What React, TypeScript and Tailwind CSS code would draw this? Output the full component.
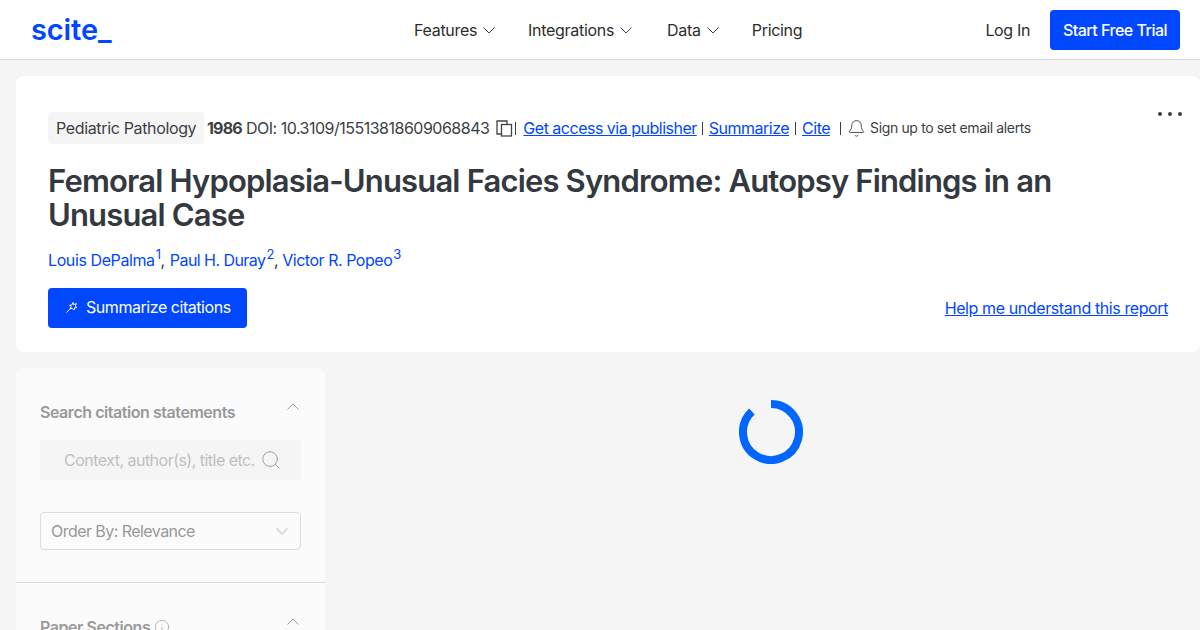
import React from "react";
import { Search, Bell, Info } from "lucide-react";

function Chev({ up = false, color = "#444", w = 1 }: { up?: boolean; color?: string; w?: number }) {
  return (
    <svg width="12" height="7" viewBox="0 0 12 7" fill="none" stroke={color} strokeWidth={w}>
      <path d={up ? "M0.5 6.5L6 1L11.5 6.5" : "M0.5 0.5L6 6L11.5 0.5"} />
    </svg>
  );
}

function NavItem({ label, arrow = true, className = "" }: { label: string; arrow?: boolean; className?: string }) {
  return (
    <div className={"flex items-center gap-[6px] text-[16px] text-[#2d2d2d] tracking-[-0.3px] " + className}>
      <span>{label}</span>
      {arrow && (
        <span className="mt-[2px] flex">
          <Chev />
        </span>
      )}
    </div>
  );
}

function CopyIcon() {
  return (
    <svg width="17" height="17" viewBox="0 0 17 17" fill="none" stroke="#3f4347" strokeWidth="1.3">
      <path d="M5 14H1V1H11V4" />
      <rect x="5.5" y="4.5" width="10" height="11.5" />
    </svg>
  );
}

function Pipe({ className }: { className: string }) {
  return <span className={"w-[1px] h-[13px] bg-[#3b3f44] mt-[1px] " + className} />;
}

function WandIcon() {
  return (
    <svg width="12" height="12" viewBox="0 0 12 12" fill="none" stroke="white" strokeWidth="1">
      <path d="M0.5 11.5L5.2 6.8" />
      <path d="M7 1.5L7.6 3.6L10.5 2.6L9.2 5L11 6.6L8.6 6.8L8 9L6.3 7.4L4 7.8L5 5.6L3.6 4.2L5.8 4.1Z" />
    </svg>
  );
}

export default function App() {
  return (
    <div className="h-[630px] w-[1200px] overflow-hidden bg-[#f5f5f5] font-['Inter',sans-serif] text-[#333]">
      <header className="h-[60px] bg-white border-b border-[#d9d9d9] flex items-center pl-[31px] pr-[20px]">
        <div className="text-[29px] font-semibold leading-none text-[#0047ff] tracking-[-0.1px] w-[81px] -mt-[1px]">scite_</div>
        <nav className="flex items-center gap-[33px] ml-[302px]">
          <NavItem label="Features" />
          <NavItem label="Integrations" />
          <NavItem label="Data" className="ml-[2px]" />
          <NavItem label="Pricing" arrow={false} />
        </nav>
        <div className="ml-auto flex items-center gap-[20px]">
          <span className="text-[16px] text-[#2d2d2d] tracking-[-0.35px]">Log In</span>
          <button className="h-[40px] w-[130px] rounded-[4px] bg-[#0047ff] text-white text-[16px] font-medium tracking-[-0.5px]">Start Free Trial</button>
        </div>
      </header>

      <main className="pt-[16px] pl-[16px]">
        <section className="relative h-[276px] bg-white rounded-[8px] pl-[32px] pr-[32px] pt-[36px]">
          <div className="flex items-center h-[32px] text-[16px] tracking-[-0.5px] text-[#3b3f44] whitespace-nowrap">
            <span className="h-[32px] w-[156px] px-[8px] flex items-center rounded-[4px] bg-[#f5f5f5] tracking-[-0.35px]">Pediatric Pathology</span>
            <span className="font-bold ml-[3px] w-[36px] tracking-[-0.8px]">1986</span>
            <span className="ml-[3px]">DOI: 10.3109/15513818609068843</span>
            <span className="ml-[7px] flex"><CopyIcon /></span>
            <Pipe className="ml-[2px]" />
            <a className="ml-[7px] text-[#0047ff] underline">Get access via publisher</a>
            <Pipe className="ml-[5px]" />
            <a className="ml-[6px] text-[#0047ff] underline">Summarize</a>
            <Pipe className="ml-[6px]" />
            <a className="ml-[6px] text-[#0047ff] underline">Cite</a>
            <Pipe className="ml-[10px]" />
            <Bell size={19} strokeWidth={1.1} className="ml-[6px] text-[#333]" />
            <span className="ml-[4px] -mt-[1px] text-[14px] tracking-[-0.36px]">Sign up to set email alerts</span>
          </div>
          <div className="absolute right-[18px] top-[36px] flex gap-[6px]">
            <span className="w-[4px] h-[4px] rounded-full bg-[#3b3f44]" />
            <span className="w-[4px] h-[4px] rounded-full bg-[#3b3f44]" />
            <span className="w-[4px] h-[4px] rounded-full bg-[#3b3f44]" />
          </div>
          <h1 className="mt-[20px] text-[31px] leading-[34px] font-semibold tracking-[-0.83px] text-[#33393f] w-[1040px]">
            Femoral Hypoplasia-Unusual Facies Syndrome: Autopsy Findings in an Unusual Case
          </h1>
          <div className="mt-[16px] h-[24px] flex items-center text-[16px] tracking-[-0.4px] text-[#0047ff] whitespace-nowrap">
            <span>Louis DePalma</span><sup className="text-[13px] ml-[1px]">1</sup>
            <span className="text-[#333]">,</span>
            <span className="ml-[5px] tracking-[-0.55px]">Paul H. Duray</span><sup className="text-[13px] ml-[1px]">2</sup>
            <span className="text-[#333]">,</span>
            <span className="ml-[4px] tracking-[-0.47px]">Victor R. Popeo</span><sup className="text-[13px] ml-[1px]">3</sup>
          </div>
          <div className="mt-[16px] flex items-center justify-between">
            <button className="h-[40px] w-[199px] rounded-[4px] bg-[#0047ff] text-white text-[16px] tracking-[-0.45px] flex items-center pl-[18px] pb-[2px] gap-[8px]">
              <WandIcon />
              <span>Summarize citations</span>
            </button>
            <a className="text-[16px] text-[#0047ff] underline tracking-[-0.4px]">Help me understand this report</a>
          </div>
        </section>

        <div className="mt-[16px] flex">
          <aside className="w-[309px] h-[300px] bg-[#fbfbfb] rounded-t-[8px] text-[#999]">
            <div className="px-[24px] pt-[32px] h-[215px] border-b border-[#dcdcdc]">
              <div className="flex justify-between items-start h-[24px]">
                <span className="text-[16px] font-semibold tracking-[-0.45px] text-[#999]">Search citation statements</span>
                <span className="mr-[2px] mt-[3px] flex"><Chev up color="#999" /></span>
              </div>
              <div className="mt-[16px] h-[40px] w-[261px] rounded-[4px] bg-[#f5f5f5] flex items-center pl-[24px]">
                <span className="text-[16px] text-[#c0c0c4] tracking-[-0.52px] whitespace-nowrap">Context, author(s), title etc.</span>
                <Search size={22} strokeWidth={1} className="ml-[5px] text-[#999]" />
              </div>
              <div className="mt-[32px] h-[38px] w-[261px] rounded-[4px] border border-[#dcdcdc] flex items-center justify-between pl-[10px] pr-[12px]">
                <span className="text-[16px] tracking-[-0.55px] text-[#999]">Order By: Relevance</span>
                <Chev color="#dcdcdc" w={2} />
              </div>
            </div>
            <div className="px-[24px] pt-[32px] flex justify-between items-start">
              <span className="flex items-center gap-[4px] text-[16px] font-semibold tracking-[-0.45px] text-[#999]">
                Paper Sections <Info size={16} strokeWidth={1} />
              </span>
              <span className="mr-[2px] mt-[3px] flex"><Chev up color="#999" /></span>
            </div>
          </aside>
          <div className="flex-1 flex justify-center pt-[32px]">
            <svg width="64" height="64" viewBox="0 0 64 64" fill="none" className="ml-[17px]">
              <path d="M32 4 A28 28 0 1 1 12.9 11.5" stroke="#0066ff" strokeWidth="8" />
            </svg>
          </div>
        </div>
      </main>
    </div>
  );
}
